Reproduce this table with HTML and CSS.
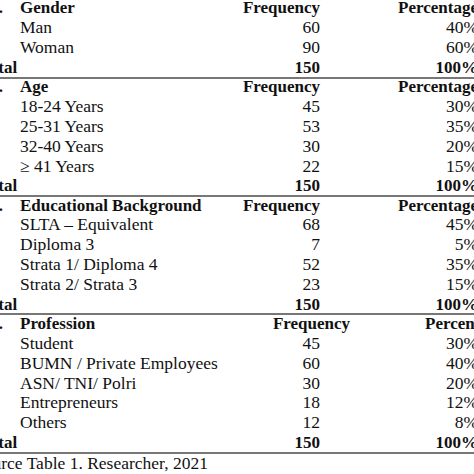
FILE: index.html
```html
<!DOCTYPE html>
<html>
<head>
<meta charset="utf-8">
<link rel="stylesheet" href="styles.css">
</head>
<body>
<div class="page">
  <div class="section">
    <div class="no b">1.</div><div class="label b">Gender</div><div class="freq b">Frequency</div><div class="pct b">Percentage</div>
    <div class="no"></div><div class="label">Man</div><div class="freq">60</div><div class="pct">40%</div>
    <div class="no"></div><div class="label">Woman</div><div class="freq">90</div><div class="pct">60%</div>
    <div class="total b tr">Total</div><div class="freq b tr">150</div><div class="pct b tr">100%</div>
  </div>
  <div class="section">
    <div class="no b">2.</div><div class="label b">Age</div><div class="freq b">Frequency</div><div class="pct b">Percentage</div>
    <div class="no"></div><div class="label">18-24 Years</div><div class="freq">45</div><div class="pct">30%</div>
    <div class="no"></div><div class="label">25-31 Years</div><div class="freq">53</div><div class="pct">35%</div>
    <div class="no"></div><div class="label">32-40 Years</div><div class="freq">30</div><div class="pct">20%</div>
    <div class="no"></div><div class="label">≥ 41 Years</div><div class="freq">22</div><div class="pct">15%</div>
    <div class="total b tr">Total</div><div class="freq b tr">150</div><div class="pct b tr">100%</div>
  </div>
  <div class="section">
    <div class="no b">3.</div><div class="label b">Educational Background</div><div class="freq b">Frequency</div><div class="pct b">Percentage</div>
    <div class="no"></div><div class="label">SLTA – Equivalent</div><div class="freq">68</div><div class="pct">45%</div>
    <div class="no"></div><div class="label">Diploma 3</div><div class="freq">7</div><div class="pct">5%</div>
    <div class="no"></div><div class="label">Strata 1/ Diploma 4</div><div class="freq">52</div><div class="pct">35%</div>
    <div class="no"></div><div class="label">Strata 2/ Strata 3</div><div class="freq">23</div><div class="pct">15%</div>
    <div class="total b tr">Total</div><div class="freq b tr">150</div><div class="pct b tr">100%</div>
  </div>
  <div class="section">
    <div class="no b">4.</div><div class="label b">Profession</div><div class="freq b wide">Frequency</div><div class="pct b"><span class="shift">Percentage</span></div>
    <div class="no"></div><div class="label">Student</div><div class="freq">45</div><div class="pct">30%</div>
    <div class="no"></div><div class="label">BUMN / Private Employees</div><div class="freq">60</div><div class="pct">40%</div>
    <div class="no"></div><div class="label">ASN/ TNI/ Polri</div><div class="freq">30</div><div class="pct">20%</div>
    <div class="no"></div><div class="label">Entrepreneurs</div><div class="freq">18</div><div class="pct">12%</div>
    <div class="no"></div><div class="label">Others</div><div class="freq">12</div><div class="pct">8%</div>
    <div class="total b tr">Total</div><div class="freq b tr">150</div><div class="pct b tr">100%</div>
  </div>
  <div class="source">Source Table 1. Researcher, 2021</div>
</div>
</body>
</html>
```
FILE: styles.css
```css
html, body {
  margin: 0;
  padding: 0;
  background: #fff;
  overflow: hidden;
}
body {
  width: 474px;
  height: 474px;
}
.page {
  margin-left: -20px;
  margin-top: -1.6px;
  width: 498px;
  font-family: "Liberation Serif", "Times New Roman", serif;
  font-size: 17.5px;
  line-height: 19.85px;
  color: #111;
}
.section {
  display: grid;
  grid-template-columns: 40px 220px 110px 128px;
  border-bottom: 2px solid #777;
}
.section + .section {
  margin-top: -1.4px;
}
.b {
  font-weight: bold;
  font-size: 17px;
}
.tr { height: 18.6px; }
.no {
  text-align: right;
  padding-right: 17px;
}
.total { grid-column: 1 / span 2; }
.freq {
  text-align: right;
  padding-right: 30px;
}
.freq.wide { padding-right: 0; }
.pct {
  text-align: right;
  white-space: nowrap;
}
.shift {
  display: inline-block;
  margin-right: -27px;
}
.source {
  margin-left: -6px;
}
```
